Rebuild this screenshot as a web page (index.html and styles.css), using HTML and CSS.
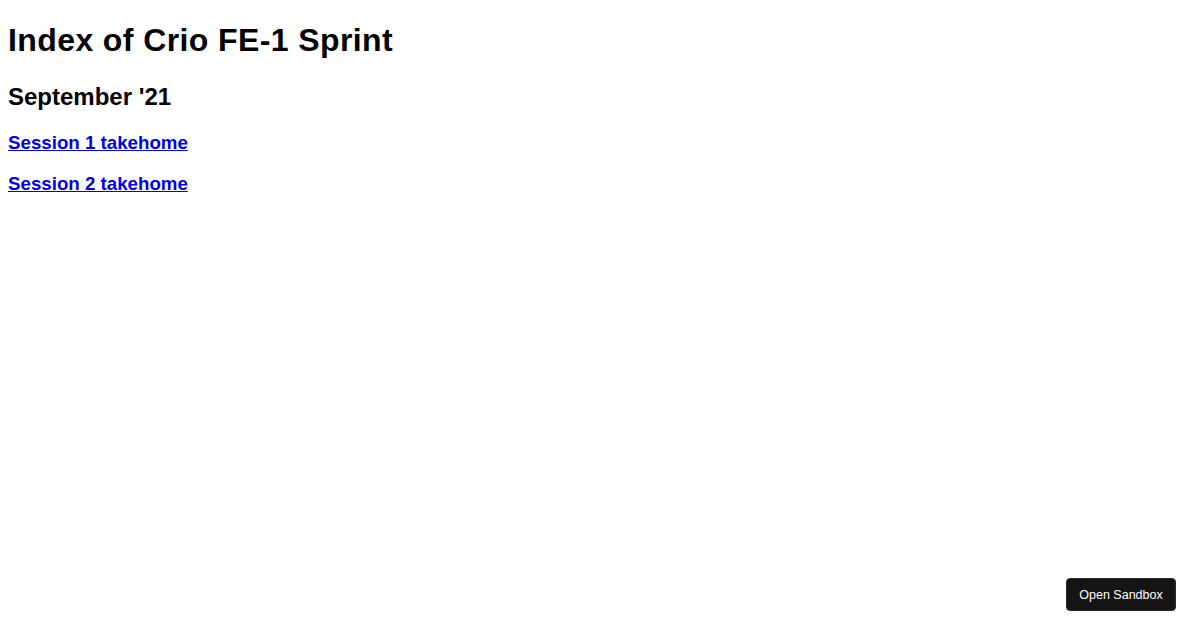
FILE: index.html
```html
<!DOCTYPE html>
<html lang="en">
<head>
<meta charset="utf-8">
<title>Index of Crio FE-1 Sprint</title>
<link rel="stylesheet" href="styles.css">
</head>
<body>
<h1 class="title">Index of Crio FE-1 Sprint</h1>
<h2 class="month">September '21</h2>
<h3 class="session"><a href="#">Session 1 takehome</a></h3>
<h3 class="session"><a href="#">Session 2 takehome</a></h3>
<a class="sandbox-btn" href="#">Open Sandbox</a>
</body>
</html>
```

FILE: styles.css
```css
body {
  font-family: "Liberation Sans", Arial, Helvetica, sans-serif;
  color: #000;
  background: #fff;
}

.title {
  margin-top: 14px;
  margin-bottom: 23.5px;
  letter-spacing: 0.4px;
}

.month {
  margin-bottom: 21px;
}

.session {
  margin: 19.7px 0;
}

a {
  color: #0000ee;
}

.sandbox-btn {
  position: fixed;
  right: 24px;
  bottom: 19px;
  width: 110px;
  height: 33px;
  box-sizing: border-box;
  display: flex;
  align-items: center;
  justify-content: center;
  background: #151515;
  color: #fff;
  border: 1px solid #2a2a2a;
  border-radius: 4px;
  font-size: 12.5px;
  text-decoration: none;
}
```
